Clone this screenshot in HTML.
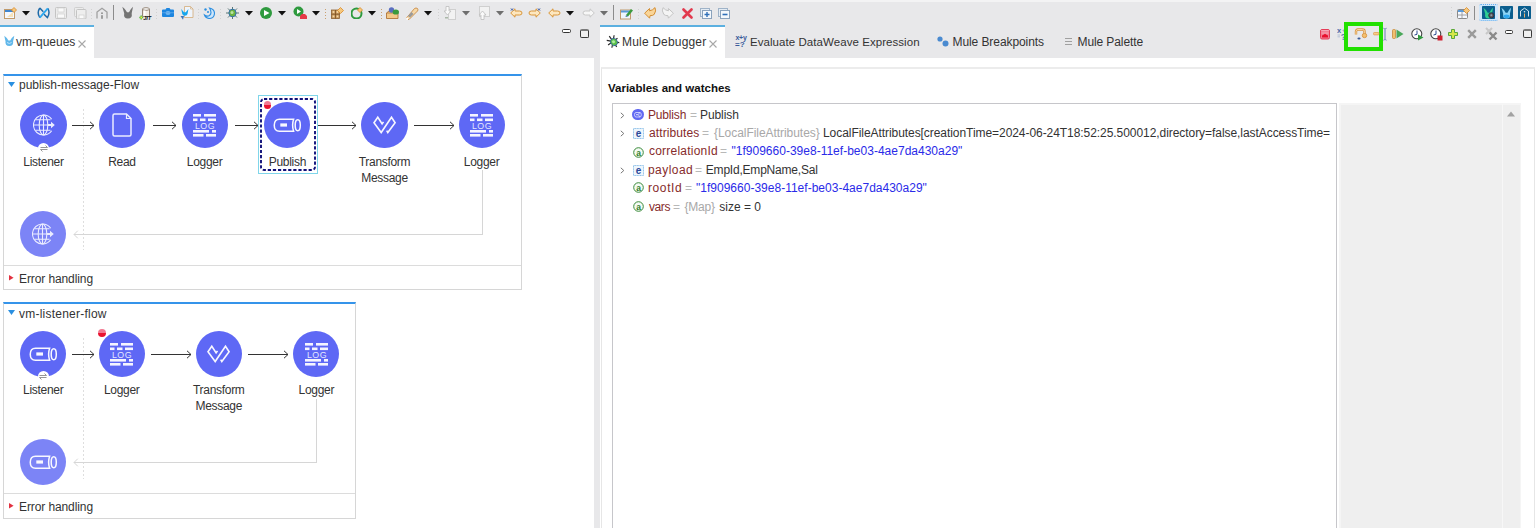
<!DOCTYPE html>
<html><head><meta charset="utf-8">
<style>
*{box-sizing:border-box;margin:0;padding:0}
html,body{width:1536px;height:528px;overflow:hidden;background:#e8e8ea;font-family:"Liberation Sans",sans-serif;font-size:12px;color:#333;position:relative}
.a{position:absolute;display:block}
.t{position:absolute;white-space:nowrap;line-height:14px}
</style></head><body>

<div class="a" style="left:0px;top:0px;width:1536px;height:2px;background:#f3f3f4"></div>
<svg class="a" style="left:4px;top:7px" width="13" height="12" viewBox="0 0 13 12"><rect x="0.5" y="2.5" width="10" height="9" fill="#f4f8ff" stroke="#c09a6b"/><rect x="1" y="3" width="9" height="2" fill="#3d86d1"/><path d="M3 10L9 5V10Z" fill="#f7e2b8"/><path d="M10 0.5L12.5 3L10 5.5L7.5 3Z" fill="#f6c77c" stroke="#d88a2a" stroke-width="0.8"/></svg>
<svg class="a" style="left:22px;top:11px" width="8" height="5" viewBox="0 0 8 5"><path d="M0 0H8L4 4.5Z" fill="#111"/></svg>
<svg class="a" style="left:37px;top:7px" width="13" height="12" viewBox="0 0 13 12"><path d="M2.8 1Q-0.4 5.8 2.8 10.6M2.8 1L6.3 4.85M10.8 1.4Q13.4 5.8 10.4 10.6L7 7.2" fill="none" stroke="#1f6aa8" stroke-width="1.5"/><path d="M2.8 10.6L10.8 1.4" stroke="#2aa8f0" stroke-width="1.8"/></svg>
<svg class="a" style="left:55px;top:7px" width="13" height="12" viewBox="0 0 13 12"><rect x="0.5" y="0.5" width="11" height="11" rx="1" fill="#ececec" stroke="#c4c4c4"/><rect x="3" y="1" width="6" height="4" fill="#fafafa" stroke="#cfcfcf" stroke-width="0.7"/><rect x="2.5" y="7" width="7" height="4" fill="#fafafa" stroke="#cfcfcf" stroke-width="0.7"/></svg>
<svg class="a" style="left:74px;top:7px" width="13" height="12" viewBox="0 0 13 12"><rect x="0.5" y="0.5" width="9" height="9" rx="1" fill="#ececec" stroke="#cfcfcf"/><rect x="2.5" y="2.5" width="9.5" height="9.5" rx="1" fill="#eeeeee" stroke="#c4c4c4"/><rect x="5" y="8" width="5" height="3.5" fill="#fafafa" stroke="#cfcfcf" stroke-width="0.7"/></svg>
<svg class="a" style="left:91px;top:9px" width="1" height="10" viewBox="0 0 1 10"><rect x="0" y="0" width="1" height="1" fill="#d2d2d2"/><rect x="0" y="3" width="1" height="1" fill="#d2d2d2"/><rect x="0" y="6" width="1" height="1" fill="#d2d2d2"/><rect x="0" y="9" width="1" height="1" fill="#d2d2d2"/></svg>
<svg class="a" style="left:96px;top:7px" width="12" height="12" viewBox="0 0 12 12"><path d="M1 11.5V5L6 1.2L11 5V11.5" fill="none" stroke="#a0a0a0" stroke-width="1.3"/><circle cx="6" cy="6.2" r="0.9" fill="#8a8a8a"/><rect x="5.2" y="8" width="1.6" height="4" rx="0.8" fill="#8a8a8a"/></svg>
<div class="a" style="left:113px;top:5px;width:1px;height:15px;background:#8c8c8c"></div>
<svg class="a" style="left:122px;top:6px" width="12" height="14" viewBox="0 0 12 14"><path d="M0.3 0.7Q3.6 3 5 6.2H7Q8.4 3 11 0.7Q10.4 4 9.7 7.2Q10.6 12.6 5.9 12.6Q1.3 12.6 2.2 7.2Q1.3 4 0.3 0.7Z" fill="#747474"/></svg>
<svg class="a" style="left:139px;top:7px" width="13" height="13" viewBox="0 0 13 13"><path d="M3.5 2V9.5H10.5V2" fill="#f3ece4" stroke="#8a7a6a" stroke-width="0.9"/><ellipse cx="7" cy="2" rx="3.5" ry="1.3" fill="#fff" stroke="#8a7a6a" stroke-width="0.9"/><rect x="5" y="3.5" width="1.5" height="5" fill="#fff"/><text x="4.2" y="12.6" font-size="5.6" font-weight="bold" font-style="italic" fill="#111" font-family="Liberation Sans">JIT</text><path d="M0.3 10.5H4.2M2.2 8.5V12.5" stroke="#5ab83a" stroke-width="1.5"/><circle cx="2.3" cy="10.5" r="0.9" fill="#e6e84a"/></svg>
<svg class="a" style="left:156px;top:9px" width="1" height="10" viewBox="0 0 1 10"><rect x="0" y="0" width="1" height="1" fill="#d2d2d2"/><rect x="0" y="3" width="1" height="1" fill="#d2d2d2"/><rect x="0" y="6" width="1" height="1" fill="#d2d2d2"/><rect x="0" y="9" width="1" height="1" fill="#d2d2d2"/></svg>
<svg class="a" style="left:162px;top:8px" width="12" height="9" viewBox="0 0 12 9"><path d="M0 2.5Q0 1.5 1 1.5H3.5L4.5 0H7.5L8.5 1.5H11Q12 1.5 12 2.5V8Q12 9 11 9H1Q0 9 0 8Z" fill="#1d86e0"/><ellipse cx="6" cy="5" rx="2.5" ry="2" fill="#74b8f0"/><rect x="0" y="4.3" width="12" height="0.9" fill="#5aa6ea"/></svg>
<svg class="a" style="left:180px;top:6px" width="14" height="14" viewBox="0 0 14 14"><path d="M4.5 0.5H10.5L13 3V11.5H4.5Z" fill="#eef4fc" stroke="#d6b286" stroke-width="0.9"/><path d="M10.5 0.5V3H13" fill="none" stroke="#d6b286" stroke-width="0.7"/><path d="M1.2 3L4 6.2H5.8L8.4 3L7.6 7.8Q7.2 9.8 4.9 9.8Q2.6 9.8 2.2 7.8Z" fill="#14a6ee"/><path d="M0.5 10H4L3 13.8Z" fill="#3a72b8"/></svg>
<svg class="a" style="left:198px;top:9px" width="1" height="10" viewBox="0 0 1 10"><rect x="0" y="0" width="1" height="1" fill="#d2d2d2"/><rect x="0" y="3" width="1" height="1" fill="#d2d2d2"/><rect x="0" y="6" width="1" height="1" fill="#d2d2d2"/><rect x="0" y="9" width="1" height="1" fill="#d2d2d2"/></svg>
<svg class="a" style="left:203px;top:7px" width="12" height="12" viewBox="0 0 12 12"><path d="M6.5 1Q11.5 2 11.5 6.5Q11 11.5 6 11.5Q2.5 11 1.5 8Q4 10 6.5 8.5Q9.5 6 6.5 1Z" fill="#cfe6fa" stroke="#2d8fe0" stroke-width="1.1"/><circle cx="2.5" cy="2.5" r="1.2" fill="#2d8fe0"/><circle cx="5" cy="5" r="1" fill="#2d8fe0"/></svg>
<svg class="a" style="left:220px;top:9px" width="1" height="10" viewBox="0 0 1 10"><rect x="0" y="0" width="1" height="1" fill="#d2d2d2"/><rect x="0" y="3" width="1" height="1" fill="#d2d2d2"/><rect x="0" y="6" width="1" height="1" fill="#d2d2d2"/><rect x="0" y="9" width="1" height="1" fill="#d2d2d2"/></svg>
<svg class="a" style="left:226px;top:7px" width="13" height="12" viewBox="0 0 13 12"><path d="M6.5 0V12M0 6H13M2 1.5L11 10.5M11 1.5L2 10.5" stroke="#4a6a6a" stroke-width="0.9"/><ellipse cx="6.5" cy="6" rx="3.6" ry="3.8" fill="#6db33f" stroke="#2f6fb0" stroke-width="1"/><circle cx="6" cy="5.5" r="1.5" fill="#b8e3a0"/></svg>
<svg class="a" style="left:245px;top:11px" width="8" height="5" viewBox="0 0 8 5"><path d="M0 0H8L4 4.5Z" fill="#111"/></svg>
<svg class="a" style="left:260px;top:7px" width="12" height="12" viewBox="0 0 12 12"><circle cx="6" cy="6" r="6" fill="#2e9a3e"/><path d="M4 3L9.5 6L4 9Z" fill="#fff"/></svg>
<svg class="a" style="left:278px;top:11px" width="8" height="5" viewBox="0 0 8 5"><path d="M0 0H8L4 4.5Z" fill="#111"/></svg>
<svg class="a" style="left:293px;top:6px" width="14" height="14" viewBox="0 0 14 14"><circle cx="5.5" cy="5.5" r="5" fill="#2e9a3e"/><path d="M4 3L8 5.5L4 8Z" fill="#fff"/><path d="M7 10L9 8H12L14 10V13H7Z" fill="#e53948"/></svg>
<svg class="a" style="left:312px;top:11px" width="8" height="5" viewBox="0 0 8 5"><path d="M0 0H8L4 4.5Z" fill="#111"/></svg>
<svg class="a" style="left:325px;top:9px" width="1" height="10" viewBox="0 0 1 10"><rect x="0" y="0" width="1" height="1" fill="#c9a070"/><rect x="0" y="3" width="1" height="1" fill="#c9a070"/><rect x="0" y="6" width="1" height="1" fill="#c9a070"/><rect x="0" y="9" width="1" height="1" fill="#c9a070"/></svg>
<svg class="a" style="left:331px;top:7px" width="13" height="12" viewBox="0 0 13 12"><rect x="0.5" y="3" width="8" height="8.5" fill="#c89b63" stroke="#8a5f2f" stroke-width="0.8"/><path d="M0.5 7.2H8.5M4.5 3V11.5" stroke="#7a4f20" stroke-width="0.8"/><circle cx="2.5" cy="5" r="0.9" fill="#f5d9a8"/><circle cx="6.5" cy="5" r="0.9" fill="#f5d9a8"/><circle cx="2.5" cy="9.3" r="0.9" fill="#f5d9a8"/><circle cx="6.5" cy="9.3" r="0.9" fill="#f5d9a8"/><path d="M9.5 0.5L12.5 3.5L9.5 6.5L6.5 3.5Z" fill="#f6c77c" stroke="#d88a2a" stroke-width="0.8"/></svg>
<svg class="a" style="left:351px;top:7px" width="12" height="12" viewBox="0 0 12 12"><circle cx="5.5" cy="6.5" r="5" fill="none" stroke="#2e9a3e" stroke-width="2"/><path d="M9 0.5L11.5 3L9 5.5L6.5 3Z" fill="#f6c77c" stroke="#d88a2a" stroke-width="0.8"/></svg>
<svg class="a" style="left:368px;top:11px" width="8" height="5" viewBox="0 0 8 5"><path d="M0 0H8L4 4.5Z" fill="#111"/></svg>
<svg class="a" style="left:381px;top:9px" width="1" height="10" viewBox="0 0 1 10"><rect x="0" y="0" width="1" height="1" fill="#c9a070"/><rect x="0" y="3" width="1" height="1" fill="#c9a070"/><rect x="0" y="6" width="1" height="1" fill="#c9a070"/><rect x="0" y="9" width="1" height="1" fill="#c9a070"/></svg>
<svg class="a" style="left:386px;top:7px" width="14" height="12" viewBox="0 0 14 12"><path d="M0.5 6L3 4H10L12 6V11.5H0.5Z" fill="#f3c98a" stroke="#b0763a" stroke-width="0.9"/><path d="M0.5 6H12" stroke="#b0763a" stroke-width="0.8"/><circle cx="5.5" cy="3" r="2.7" fill="#5a6ec0"/><ellipse cx="9.8" cy="5" rx="3.2" ry="2.6" fill="#3a9a3e"/></svg>
<svg class="a" style="left:405px;top:7px" width="14" height="13" viewBox="0 0 14 13"><path d="M1.5 11L9.5 1.5Q11 0.5 12.5 1.5Q13.5 3 12.5 4L4 12.5Q2 13 1.5 11Z" fill="#f6d8a8" stroke="#c88a44" stroke-width="0.9"/><path d="M3 9L6.5 5L8.5 7L5 10.5Z" fill="#9a9a9a"/><path d="M1.5 11L3 12.5" stroke="#fff" stroke-width="2"/></svg>
<svg class="a" style="left:424px;top:11px" width="8" height="5" viewBox="0 0 8 5"><path d="M0 0H8L4 4.5Z" fill="#111"/></svg>
<svg class="a" style="left:438px;top:9px" width="1" height="10" viewBox="0 0 1 10"><rect x="0" y="0" width="1" height="1" fill="#d2d2d2"/><rect x="0" y="3" width="1" height="1" fill="#d2d2d2"/><rect x="0" y="6" width="1" height="1" fill="#d2d2d2"/><rect x="0" y="9" width="1" height="1" fill="#d2d2d2"/></svg>
<svg class="a" style="left:444px;top:6px" width="12" height="14" viewBox="0 0 12 14"><rect x="4.5" y="3.5" width="7" height="10" fill="#f2f2f2" stroke="#cfcfcf"/><path d="M2 0.5H5V5H7L3.5 9L0 5H2Z" fill="#fafafa" stroke="#bcbcbc" stroke-width="0.8"/><rect x="1" y="11" width="3" height="1.5" fill="#aab8a8"/></svg>
<svg class="a" style="left:462px;top:11px" width="8" height="5" viewBox="0 0 8 5"><path d="M0 0H8L4 4.5Z" fill="#6e6e6e"/></svg>
<svg class="a" style="left:478px;top:6px" width="12" height="14" viewBox="0 0 12 14"><rect x="1.5" y="0.5" width="10" height="10" fill="#f2f2f2" stroke="#cfcfcf"/><path d="M3 13.5V9H1L4.5 5L8 9H6V13.5Z" fill="#fafafa" stroke="#bcbcbc" stroke-width="0.8"/></svg>
<svg class="a" style="left:496px;top:11px" width="8" height="5" viewBox="0 0 8 5"><path d="M0 0H8L4 4.5Z" fill="#6e6e6e"/></svg>
<svg class="a" style="left:510px;top:8px" width="13" height="10" viewBox="0 0 13 10"><path d="M0.7 5L5 0.8V3H9.5Q12 3 12 5Q12 7 9.5 7H5V9.2Z" fill="#fde7bf" stroke="#d9963a" stroke-width="1"/><path d="M1 0.5L3 2.5M3 0.5L1 2.5" stroke="#2c4fa0" stroke-width="1"/></svg>
<svg class="a" style="left:528px;top:8px" width="13" height="10" viewBox="0 0 13 10"><g transform="translate(13,0) scale(-1,1)"><path d="M0.7 5L5 0.8V3H9.5Q12 3 12 5Q12 7 9.5 7H5V9.2Z" fill="#fde7bf" stroke="#d9963a" stroke-width="1"/></g><path d="M10 0.5L12 2.5M12 0.5L10 2.5" stroke="#2c4fa0" stroke-width="1"/></svg>
<svg class="a" style="left:548px;top:8px" width="13" height="10" viewBox="0 0 13 10"><path d="M0.7 5L5 0.8V3H9.5Q12 3 12 5Q12 7 9.5 7H5V9.2Z" fill="#fde7bf" stroke="#d9963a" stroke-width="1"/></svg>
<svg class="a" style="left:566px;top:11px" width="8" height="5" viewBox="0 0 8 5"><path d="M0 0H8L4 4.5Z" fill="#111"/></svg>
<svg class="a" style="left:582px;top:8px" width="13" height="10" viewBox="0 0 13 10"><g transform="translate(13,0) scale(-1,1)"><path d="M0.7 5L5 0.8V3H9.5Q12 3 12 5Q12 7 9.5 7H5V9.2Z" fill="#f7f7f7" stroke="#c8c8c8" stroke-width="1"/></g></svg>
<svg class="a" style="left:600px;top:11px" width="8" height="5" viewBox="0 0 8 5"><path d="M0 0H8L4 4.5Z" fill="#6e6e6e"/></svg>
<div class="a" style="left:613px;top:5px;width:1px;height:15px;background:#8c8c8c"></div>
<svg class="a" style="left:620px;top:7px" width="14" height="13" viewBox="0 0 14 13"><rect x="0.5" y="3" width="10" height="9" fill="#eef6ff" stroke="#c09a6b"/><rect x="1" y="3.5" width="9" height="2" fill="#5a9ad8"/><path d="M6 8L11 2L13 3.5L8 9.5Z" fill="#3a9a3e"/><path d="M6 8L8 9.5L5.5 10Z" fill="#4a70a0"/></svg>
<svg class="a" style="left:638px;top:9px" width="1" height="10" viewBox="0 0 1 10"><rect x="0" y="0" width="1" height="1" fill="#d2d2d2"/><rect x="0" y="3" width="1" height="1" fill="#d2d2d2"/><rect x="0" y="6" width="1" height="1" fill="#d2d2d2"/><rect x="0" y="9" width="1" height="1" fill="#d2d2d2"/></svg>
<svg class="a" style="left:644px;top:7px" width="13" height="12" viewBox="0 0 13 12"><path d="M0.6 6.2L5.6 1.5V3.8Q8.5 3.5 11 0.6Q12.6 3.8 10.2 7.4Q8.6 8.8 6 8.7L5.6 11.2Z" fill="#fad598" stroke="#d38f35" stroke-width="1"/></svg>
<svg class="a" style="left:661px;top:7px" width="13" height="12" viewBox="0 0 13 12"><g transform="translate(13,0) scale(-1,1)"><path d="M0.6 6.2L5.6 1.5V3.8Q8.5 3.5 11 0.6Q12.6 3.8 10.2 7.4Q8.6 8.8 6 8.7L5.6 11.2Z" fill="#f4f4f4" stroke="#c4c4c4" stroke-width="1"/></g></svg>
<svg class="a" style="left:682px;top:8px" width="11" height="11" viewBox="0 0 11 11"><path d="M1.5 1.5L9.5 9.5M9.5 1.5L1.5 9.5" stroke="#e23a4e" stroke-width="2.6" stroke-linecap="round"/></svg>
<svg class="a" style="left:700px;top:8px" width="12" height="11" viewBox="0 0 12 11"><rect x="0.5" y="0.5" width="9" height="8" fill="#e4ecf4" stroke="#9fb3c8"/><rect x="2.5" y="2.5" width="9" height="8" fill="#f4f8fc" stroke="#8aa2bc"/><path d="M4.5 6.5H9.5M7 4V9" stroke="#2f6fb8" stroke-width="1.4"/></svg>
<svg class="a" style="left:718px;top:8px" width="12" height="11" viewBox="0 0 12 11"><rect x="0.5" y="0.5" width="9" height="8" fill="#e4ecf4" stroke="#9fb3c8"/><rect x="2.5" y="2.5" width="9" height="8" fill="#f4f8fc" stroke="#8aa2bc"/><path d="M4.5 6.5H9.5" stroke="#2f6fb8" stroke-width="1.6"/></svg>
<svg class="a" style="left:1451px;top:7px" width="1" height="12" viewBox="0 0 1 12"><rect x="0" y="0" width="1" height="1" fill="#d2d2d2"/><rect x="0" y="3" width="1" height="1" fill="#d2d2d2"/><rect x="0" y="6" width="1" height="1" fill="#d2d2d2"/><rect x="0" y="9" width="1" height="1" fill="#d2d2d2"/></svg>
<svg class="a" style="left:1457px;top:7px" width="13" height="12" viewBox="0 0 13 12"><rect x="0.5" y="2.5" width="10" height="9" rx="1" fill="#f4f8ff" stroke="#8a8a8a"/><rect x="1" y="3" width="9" height="2" fill="#5a9ad8"/><path d="M1 8H10M5 5V11.5" stroke="#9a9a9a" stroke-width="0.9"/><path d="M9.5 0.5L12.5 3.5L9.5 6.5L6.5 3.5Z" fill="#f6c77c" stroke="#d88a2a" stroke-width="0.8"/></svg>
<div class="a" style="left:1474px;top:6px;width:1px;height:14px;background:#8c8c8c"></div>
<div class="a" style="left:1479px;top:4px;width:19px;height:17px;background:#cde6fb;border-top:1px dotted #6ab0ee;border-bottom:1px dotted #6ab0ee;border-radius:2px"></div>
<svg class="a" style="left:1482px;top:6px" width="13" height="13" viewBox="0 0 13 13"><rect x="0" y="0" width="13" height="13" rx="0.8" fill="#0b5e8e"/><g transform="translate(1.2,1.2) scale(0.9)"><path d="M0.3 0.7Q3.6 3 5 6.2H7Q8.4 3 11 0.7Q10.4 4 9.7 7.2Q10.6 12.6 5.9 12.6Q1.3 12.6 2.2 7.2Q1.3 4 0.3 0.7Z" fill="#2fcf94"/></g><circle cx="9.3" cy="9.3" r="2.6" fill="#555" stroke="#2a2a40" stroke-width="0.8"/><circle cx="9.3" cy="9.3" r="1" fill="#8a9ab0"/></svg>
<svg class="a" style="left:1500px;top:6px" width="13" height="13" viewBox="0 0 13 13"><rect x="0" y="0" width="13" height="13" rx="0.8" fill="#0b5e8e"/><g transform="translate(1.2,1.2) scale(0.9)"><path d="M0.3 0.7Q3.6 3 5 6.2H7Q8.4 3 11 0.7Q10.4 4 9.7 7.2Q10.6 12.6 5.9 12.6Q1.3 12.6 2.2 7.2Q1.3 4 0.3 0.7Z" fill="#8cd4f5"/></g><ellipse cx="6.5" cy="10.3" rx="3.2" ry="1.8" fill="#2ea8f0"/></svg>
<svg class="a" style="left:1518px;top:6px" width="13" height="13" viewBox="0 0 13 13"><rect x="0" y="0" width="13" height="13" rx="0.8" fill="#0b5e8e"/><path d="M2.5 10.5V5L6.5 2.2L10.5 5V10.5" fill="none" stroke="#d8e6f0" stroke-width="1"/><circle cx="6.5" cy="5.8" r="0.8" fill="#e0eaf2"/><rect x="6" y="7.5" width="1" height="4" fill="#e8b070"/></svg>
<div class="a" style="left:0px;top:25px;width:94px;height:33px;background:#fff;border-top:2px solid #5cb0e0"></div>
<svg class="a" style="left:4px;top:35px" width="11" height="12" viewBox="0 0 11 12"><path d="M0.3 0.7Q3.2 2.8 4.4 5.4H6.2Q7.4 2.8 10.3 0.7Q9.7 3.8 9.1 6.2Q9.9 11 5.3 11Q0.8 11 1.5 6.2Q0.9 3.8 0.3 0.7Z" fill="#62b8ea"/><path d="M3 7.5Q5.3 9.5 7.6 7.5" stroke="#c8e8fb" stroke-width="0.9" fill="none"/></svg>
<div class="t" style="left:16px;top:35px;font-size:12px;color:#333;font-weight:400;letter-spacing:0px;">vm-queues</div>
<svg class="a" style="left:78px;top:40px" width="8" height="8" viewBox="0 0 8 8"><path d="M0.5 0.5L7.5 7.5M7.5 0.5L0.5 7.5" stroke="#a8a8a8" stroke-width="1.1"/></svg>
<div class="a" style="left:562px;top:29px;width:8.5px;height:4px;border:1.5px solid #333;border-radius:1.5px;background:#fff"></div>
<div class="a" style="left:580px;top:29px;width:9px;height:9px;border:1.5px solid #3a3a3a;border-top:2.5px solid #7a7a7a;border-radius:2px;background:#f0f0f0"></div>
<div class="a" style="left:0px;top:58px;width:594px;height:470px;background:#fff"></div>
<div class="a" style="left:3px;top:74px;width:519px;height:216px;border:1px solid #d6d6d6;border-top:2px solid #3594ea;background:#fff"></div>
<svg class="a" style="left:8px;top:81.6px" width="7" height="6" viewBox="0 0 7 6"><path d="M0 0H7L3.5 5Z" fill="#2a8fe0"/></svg>
<div class="t" style="left:19px;top:78px;font-size:12px;color:#333;font-weight:400;letter-spacing:0px;">publish-message-Flow</div>
<div class="a" style="left:83px;top:109px;width:1px;height:141px;background:repeating-linear-gradient(#dedede 0 2px,transparent 2px 4px)"></div>
<div class="a" style="left:20.4px;top:101.9px;width:46.2px;height:46.2px;border-radius:50%;background:#5e68f5"></div>
<svg class="a" style="left:32.5px;top:114px" width="24" height="22" viewBox="0 0 24 22"><g fill="none" stroke="#eaecff" stroke-width="1.1"><path d="M18.7 5.3A10 10 0 1 0 18.7 16.7"/><path d="M10.5 1A4.3 10 0 0 0 10.5 21A4.3 10 0 0 0 10.5 1"/><path d="M10.5 1V21M2.5 5.8H17.5M0.8 11H15M2.5 16.2H17.5"/></g><path d="M15 10H18V7.8L21.8 11L18 14.2V12H15Z" fill="#eaecff"/></svg>
<div class="a" style="left:38.0px;top:142.8px;width:11px;height:11px;border-radius:50%;background:#fff"></div>
<svg class="a" style="left:39.5px;top:144.8px" width="8" height="7" viewBox="0 0 8 7"><path d="M0.5 2.5H7.5M5.5 0.5L7.5 2.5M7.5 4.5H0.5M2.5 6.5L0.5 4.5" stroke="#8a8a8a" stroke-width="0.9" fill="none"/></svg>
<div class="a" style="left:98.9px;top:101.9px;width:46.2px;height:46.2px;border-radius:50%;background:#5e68f5"></div>
<svg class="a" style="left:112px;top:113px" width="20" height="24" viewBox="0 0 20 24"><path d="M2.5 1H14.5L19 5.5V21.5Q19 23 17.5 23H2.5Q1 23 1 21.5V2.5Q1 1 2.5 1Z" fill="none" stroke="#eaecff" stroke-width="1.5"/><path d="M14.5 1V5.5H19" fill="none" stroke="#eaecff" stroke-width="1.2"/></svg>
<div class="a" style="left:181.5px;top:101.9px;width:46.2px;height:46.2px;border-radius:50%;background:#5e68f5"></div>
<svg class="a" style="left:193.1px;top:114px" width="23" height="23" viewBox="0 0 23 23"><g fill="#f4f4ff"><rect x="0" y="0" width="8" height="2.6"/><rect x="11" y="0" width="12" height="2.6"/><rect x="0" y="4.5" width="4.5" height="2.6"/><rect x="7" y="4.5" width="5.5" height="2.6"/><rect x="15" y="4.5" width="8" height="2.6"/><rect x="0" y="16" width="16" height="2.6"/><rect x="19" y="16" width="4" height="2.6"/><rect x="0" y="20" width="10.5" height="2.6"/><rect x="13" y="20" width="10" height="2.6"/></g><text x="12" y="14.8" text-anchor="middle" font-family="Liberation Sans" font-size="8.8" fill="#e4e6ff" letter-spacing="0.5">LOG</text></svg>
<div class="a" style="left:257.5px;top:95px;width:60.5px;height:79px;border:1.4px solid #80d6ea"></div>
<svg class="a" style="left:258px;top:96px" width="60" height="78" viewBox="0 0 60 78"><rect x="3" y="3" width="54" height="71" rx="3" fill="none" stroke="#10107a" stroke-width="1.9" stroke-dasharray="3.2 1.9"/></svg>
<div class="a" style="left:264.29999999999995px;top:101.9px;width:46.2px;height:46.2px;border-radius:50%;background:#5e68f5"></div>
<svg class="a" style="left:272.9px;top:117.5px" width="29" height="15" viewBox="0 0 29 15"><path d="M20.6 1.15H6.5Q1.25 1.15 1.25 7.15Q1.25 13.15 6.5 13.15H20.6Q18.6 7.15 20.6 1.15Z" fill="none" stroke="#f8f8ff" stroke-width="1.5"/><ellipse cx="24.75" cy="7.15" rx="2.55" ry="5.5" fill="none" stroke="#f8f8ff" stroke-width="1.5"/><rect x="7.3" y="5.4" width="6.7" height="3.2" fill="#f8f8ff"/></svg>
<div class="a" style="left:263.7px;top:101.3px;width:7.8px;height:7.8px;border-radius:50%;background:linear-gradient(#f27a92 0 45%,#ea1430 45%)"></div>
<div class="a" style="left:361.4px;top:101.9px;width:46.2px;height:46.2px;border-radius:50%;background:#5e68f5"></div>
<svg class="a" style="left:371.0px;top:113px" width="27" height="24" viewBox="0 0 27 24"><path d="M12.5 8.9L11.1 10.9L6.8 4.3L3 9.8L10.2 19.5L20.5 4.3L24.1 9.8L16.8 19.5L15.7 17.7" fill="none" stroke="#f6f6ff" stroke-width="1.6" stroke-linejoin="miter" stroke-miterlimit="6"/></svg>
<div class="a" style="left:458.5px;top:101.9px;width:46.2px;height:46.2px;border-radius:50%;background:#5e68f5"></div>
<svg class="a" style="left:470.1px;top:114px" width="23" height="23" viewBox="0 0 23 23"><g fill="#f4f4ff"><rect x="0" y="0" width="8" height="2.6"/><rect x="11" y="0" width="12" height="2.6"/><rect x="0" y="4.5" width="4.5" height="2.6"/><rect x="7" y="4.5" width="5.5" height="2.6"/><rect x="15" y="4.5" width="8" height="2.6"/><rect x="0" y="16" width="16" height="2.6"/><rect x="19" y="16" width="4" height="2.6"/><rect x="0" y="20" width="10.5" height="2.6"/><rect x="13" y="20" width="10" height="2.6"/></g><text x="12" y="14.8" text-anchor="middle" font-family="Liberation Sans" font-size="8.8" fill="#e4e6ff" letter-spacing="0.5">LOG</text></svg>
<svg class="a" style="left:72px;top:121px" width="23" height="9" viewBox="0 0 23 9"><path d="M0 4.5H22M18 0.8L22 4.5L18 8.2" fill="none" stroke="#333" stroke-width="1"/></svg>
<svg class="a" style="left:153px;top:121px" width="24" height="9" viewBox="0 0 24 9"><path d="M0 4.5H23M19 0.8L23 4.5L19 8.2" fill="none" stroke="#333" stroke-width="1"/></svg>
<svg class="a" style="left:235px;top:121px" width="24" height="9" viewBox="0 0 24 9"><path d="M0 4.5H23M19 0.8L23 4.5L19 8.2" fill="none" stroke="#333" stroke-width="1"/></svg>
<svg class="a" style="left:318px;top:121px" width="39" height="9" viewBox="0 0 39 9"><path d="M0 4.5H38M34 0.8L38 4.5L34 8.2" fill="none" stroke="#333" stroke-width="1"/></svg>
<svg class="a" style="left:414px;top:121px" width="41" height="9" viewBox="0 0 41 9"><path d="M0 4.5H40M36 0.8L40 4.5L36 8.2" fill="none" stroke="#333" stroke-width="1"/></svg>
<div class="t" style="left:-16.5px;width:120px;top:154.5px;text-align:center;color:#333;letter-spacing:-0.3px">Listener</div>
<div class="t" style="left:62px;width:120px;top:154.5px;text-align:center;color:#333;letter-spacing:-0.3px">Read</div>
<div class="t" style="left:144.6px;width:120px;top:154.5px;text-align:center;color:#333;letter-spacing:-0.3px">Logger</div>
<div class="t" style="left:227.39999999999998px;width:120px;top:154.5px;text-align:center;color:#333;letter-spacing:-0.3px">Publish</div>
<div class="t" style="left:324.5px;width:120px;top:154.5px;text-align:center;color:#333;letter-spacing:-0.3px">Transform</div>
<div class="t" style="left:324.5px;width:120px;top:170.5px;text-align:center;color:#333;letter-spacing:-0.3px">Message</div>
<div class="t" style="left:421.6px;width:120px;top:154.5px;text-align:center;color:#333;letter-spacing:-0.3px">Logger</div>
<div class="a" style="left:482px;top:170px;width:1px;height:65px;background:#d6d6d6"></div>
<div class="a" style="left:74px;top:234px;width:409px;height:1px;background:#d6d6d6"></div>
<svg class="a" style="left:73px;top:230px" width="6" height="9" viewBox="0 0 6 9"><path d="M4.8 0.7L1 4.5L4.8 8.3" fill="none" stroke="#d6d6d6" stroke-width="1"/></svg>
<div class="a" style="left:19.9px;top:210.70000000000002px;width:46.2px;height:46.2px;border-radius:50%;background:#7c84f6"></div>
<svg class="a" style="left:32px;top:222.8px" width="24" height="22" viewBox="0 0 24 22"><g fill="none" stroke="#eaecff" stroke-width="1.1"><path d="M18.7 5.3A10 10 0 1 0 18.7 16.7"/><path d="M10.5 1A4.3 10 0 0 0 10.5 21A4.3 10 0 0 0 10.5 1"/><path d="M10.5 1V21M2.5 5.8H17.5M0.8 11H15M2.5 16.2H17.5"/></g><path d="M15 10H18V7.8L21.8 11L18 14.2V12H15Z" fill="#eaecff"/></svg>
<div class="a" style="left:4px;top:265px;width:517px;height:1px;background:#dcdcdc"></div>
<svg class="a" style="left:8.5px;top:274.8px" width="5" height="6" viewBox="0 0 5 6"><path d="M0 0L4.6 2.8L0 5.6Z" fill="#e2303f"/></svg>
<div class="t" style="left:19px;top:272px;font-size:12px;color:#333;font-weight:400;letter-spacing:-0.1px;">Error handling</div>
<div class="a" style="left:3px;top:302px;width:353px;height:217px;border:1px solid #d6d6d6;border-top:2px solid #3594ea;background:#fff"></div>
<svg class="a" style="left:8px;top:310.3px" width="7" height="6" viewBox="0 0 7 6"><path d="M0 0H7L3.5 5Z" fill="#2a8fe0"/></svg>
<div class="t" style="left:19px;top:307px;font-size:12px;color:#333;font-weight:400;letter-spacing:0.23px;">vm-listener-flow</div>
<div class="a" style="left:83px;top:338px;width:1px;height:141px;background:repeating-linear-gradient(#dedede 0 2px,transparent 2px 4px)"></div>
<div class="a" style="left:20.1px;top:330.9px;width:46.2px;height:46.2px;border-radius:50%;background:#5e68f5"></div>
<svg class="a" style="left:28.700000000000003px;top:346.5px" width="29" height="15" viewBox="0 0 29 15"><path d="M20.6 1.15H6.5Q1.25 1.15 1.25 7.15Q1.25 13.15 6.5 13.15H20.6Q18.6 7.15 20.6 1.15Z" fill="none" stroke="#f8f8ff" stroke-width="1.5"/><ellipse cx="24.75" cy="7.15" rx="2.55" ry="5.5" fill="none" stroke="#f8f8ff" stroke-width="1.5"/><rect x="7.3" y="5.4" width="6.7" height="3.2" fill="#f8f8ff"/></svg>
<div class="a" style="left:37.7px;top:371.3px;width:11px;height:11px;border-radius:50%;background:#fff"></div>
<svg class="a" style="left:39.2px;top:373.3px" width="8" height="7" viewBox="0 0 8 7"><path d="M0.5 2.5H7.5M5.5 0.5L7.5 2.5M7.5 4.5H0.5M2.5 6.5L0.5 4.5" stroke="#8a8a8a" stroke-width="0.9" fill="none"/></svg>
<div class="a" style="left:98.6px;top:330.9px;width:46.2px;height:46.2px;border-radius:50%;background:#5e68f5"></div>
<svg class="a" style="left:110.2px;top:343px" width="23" height="23" viewBox="0 0 23 23"><g fill="#f4f4ff"><rect x="0" y="0" width="8" height="2.6"/><rect x="11" y="0" width="12" height="2.6"/><rect x="0" y="4.5" width="4.5" height="2.6"/><rect x="7" y="4.5" width="5.5" height="2.6"/><rect x="15" y="4.5" width="8" height="2.6"/><rect x="0" y="16" width="16" height="2.6"/><rect x="19" y="16" width="4" height="2.6"/><rect x="0" y="20" width="10.5" height="2.6"/><rect x="13" y="20" width="10" height="2.6"/></g><text x="12" y="14.8" text-anchor="middle" font-family="Liberation Sans" font-size="8.8" fill="#e4e6ff" letter-spacing="0.5">LOG</text></svg>
<div class="a" style="left:98.4px;top:329.3px;width:7.8px;height:7.8px;border-radius:50%;background:linear-gradient(#f27a92 0 45%,#ea1430 45%)"></div>
<div class="a" style="left:195.70000000000002px;top:330.9px;width:46.2px;height:46.2px;border-radius:50%;background:#5e68f5"></div>
<svg class="a" style="left:205.3px;top:342px" width="27" height="24" viewBox="0 0 27 24"><path d="M12.5 8.9L11.1 10.9L6.8 4.3L3 9.8L10.2 19.5L20.5 4.3L24.1 9.8L16.8 19.5L15.7 17.7" fill="none" stroke="#f6f6ff" stroke-width="1.6" stroke-linejoin="miter" stroke-miterlimit="6"/></svg>
<div class="a" style="left:293.29999999999995px;top:330.9px;width:46.2px;height:46.2px;border-radius:50%;background:#5e68f5"></div>
<svg class="a" style="left:304.9px;top:343px" width="23" height="23" viewBox="0 0 23 23"><g fill="#f4f4ff"><rect x="0" y="0" width="8" height="2.6"/><rect x="11" y="0" width="12" height="2.6"/><rect x="0" y="4.5" width="4.5" height="2.6"/><rect x="7" y="4.5" width="5.5" height="2.6"/><rect x="15" y="4.5" width="8" height="2.6"/><rect x="0" y="16" width="16" height="2.6"/><rect x="19" y="16" width="4" height="2.6"/><rect x="0" y="20" width="10.5" height="2.6"/><rect x="13" y="20" width="10" height="2.6"/></g><text x="12" y="14.8" text-anchor="middle" font-family="Liberation Sans" font-size="8.8" fill="#e4e6ff" letter-spacing="0.5">LOG</text></svg>
<svg class="a" style="left:72px;top:350px" width="23" height="9" viewBox="0 0 23 9"><path d="M0 4.5H22M18 0.8L22 4.5L18 8.2" fill="none" stroke="#333" stroke-width="1"/></svg>
<svg class="a" style="left:151px;top:350px" width="41" height="9" viewBox="0 0 41 9"><path d="M0 4.5H40M36 0.8L40 4.5L36 8.2" fill="none" stroke="#333" stroke-width="1"/></svg>
<svg class="a" style="left:248px;top:350px" width="41" height="9" viewBox="0 0 41 9"><path d="M0 4.5H40M36 0.8L40 4.5L36 8.2" fill="none" stroke="#333" stroke-width="1"/></svg>
<div class="t" style="left:-16.799999999999997px;width:120px;top:383px;text-align:center;color:#333;letter-spacing:-0.3px">Listener</div>
<div class="t" style="left:61.7px;width:120px;top:383px;text-align:center;color:#333;letter-spacing:-0.3px">Logger</div>
<div class="t" style="left:158.8px;width:120px;top:383px;text-align:center;color:#333;letter-spacing:-0.3px">Transform</div>
<div class="t" style="left:158.8px;width:120px;top:399px;text-align:center;color:#333;letter-spacing:-0.3px">Message</div>
<div class="t" style="left:256.4px;width:120px;top:383px;text-align:center;color:#333;letter-spacing:-0.3px">Logger</div>
<div class="a" style="left:316px;top:399px;width:1px;height:64px;background:#d6d6d6"></div>
<div class="a" style="left:74px;top:462px;width:243px;height:1px;background:#d6d6d6"></div>
<svg class="a" style="left:73px;top:458px" width="6" height="9" viewBox="0 0 6 9"><path d="M4.8 0.7L1 4.5L4.8 8.3" fill="none" stroke="#d6d6d6" stroke-width="1"/></svg>
<div class="a" style="left:20.1px;top:438.9px;width:46.2px;height:46.2px;border-radius:50%;background:#7c84f6"></div>
<svg class="a" style="left:28.700000000000003px;top:454.5px" width="29" height="15" viewBox="0 0 29 15"><path d="M20.6 1.15H6.5Q1.25 1.15 1.25 7.15Q1.25 13.15 6.5 13.15H20.6Q18.6 7.15 20.6 1.15Z" fill="none" stroke="#f8f8ff" stroke-width="1.5"/><ellipse cx="24.75" cy="7.15" rx="2.55" ry="5.5" fill="none" stroke="#f8f8ff" stroke-width="1.5"/><rect x="7.3" y="5.4" width="6.7" height="3.2" fill="#f8f8ff"/></svg>
<div class="a" style="left:4px;top:493px;width:351px;height:1px;background:#dcdcdc"></div>
<svg class="a" style="left:8.5px;top:502.5px" width="5" height="6" viewBox="0 0 5 6"><path d="M0 0L4.6 2.8L0 5.6Z" fill="#e2303f"/></svg>
<div class="t" style="left:19px;top:500px;font-size:12px;color:#333;font-weight:400;letter-spacing:-0.1px;">Error handling</div>
<div class="a" style="left:600px;top:25px;width:125px;height:33px;background:#fff;border-top:2px solid #5cb0e0"></div>
<svg class="a" style="left:604px;top:33px" width="16" height="16" viewBox="0 0 16 16"><g transform="rotate(-35 9 8.5)"><path d="M9 2V15M3 8.5H14.5M4.5 4L13.5 13M13.5 4L4.5 13" stroke="#2a2a2a" stroke-width="1.2"/><ellipse cx="9.5" cy="9.5" rx="3.3" ry="3.8" fill="#5cc04a" stroke="#2f5fa0" stroke-width="0.8"/><circle cx="9.3" cy="9" r="1.5" fill="#b0eaa0"/></g></svg>
<div class="t" style="left:622px;top:35px;font-size:12px;color:#333;font-weight:400;letter-spacing:0.18px;">Mule Debugger</div>
<svg class="a" style="left:709px;top:40px" width="8" height="8" viewBox="0 0 8 8"><path d="M0.5 0.5L7.5 7.5M7.5 0.5L0.5 7.5" stroke="#a8a8a8" stroke-width="1.1"/></svg>
<svg class="a" style="left:735px;top:33px" width="15" height="15" viewBox="0 0 15 15"><text x="0.5" y="6.5" font-family="Liberation Sans" font-weight="bold" font-size="7" fill="#3a5a9a" letter-spacing="-0.3">x+y</text><text x="0" y="13.5" font-family="Liberation Sans" font-weight="bold" font-size="8" fill="#3a5a9a">=?</text></svg>
<div class="t" style="left:750px;top:35px;font-size:11.5px;color:#333;font-weight:400;letter-spacing:0.06px;">Evaluate DataWeave Expression</div>
<svg class="a" style="left:937px;top:36px" width="12" height="11" viewBox="0 0 12 11"><circle cx="3" cy="3" r="2.6" fill="#4a8ad0"/><circle cx="8.5" cy="7.5" r="3" fill="#4a8ad0"/></svg>
<div class="t" style="left:952.5px;top:35px;font-size:12px;color:#333;font-weight:400;letter-spacing:-0.08px;">Mule Breakpoints</div>
<svg class="a" style="left:1065px;top:38px" width="7" height="7" viewBox="0 0 7 7"><path d="M0 0.5H7M0 3.5H7M0 6.5H7" stroke="#a0a0a0" stroke-width="1"/></svg>
<div class="t" style="left:1077.5px;top:35px;font-size:12px;color:#333;font-weight:400;letter-spacing:-0.1px;">Mule Palette</div>
<svg class="a" style="left:1320px;top:29px" width="10" height="11" viewBox="0 0 10 11"><rect x="0.5" y="0.5" width="9" height="9.5" rx="1.5" fill="#f27f94" stroke="#e53c58" stroke-width="1"/><path d="M1.5 1.5H8.5" stroke="#fbd0d8" stroke-width="1" stroke-dasharray="1 1"/><rect x="1.5" y="3.5" width="7" height="1.2" fill="#f5a0b0"/><path d="M2 8.5V6.5L3.5 5.8L5 4.8L6.5 5.8L8 6.5V8.5Z" fill="#e8102e"/></svg>
<svg class="a" style="left:1337px;top:26px" width="9" height="15" viewBox="0 0 9 15"><text x="0" y="6.5" font-family="Liberation Sans" font-weight="bold" font-size="7.5" fill="#4a6aa8">x</text><text x="5" y="6" font-family="Liberation Sans" font-weight="bold" font-size="6" fill="#8aa0c8">+</text><path d="M0.5 9H3M0.5 10.8H3" stroke="#a8b8d0" stroke-width="0.8"/><text x="3.8" y="13.5" font-family="Liberation Sans" font-weight="bold" font-size="8.5" fill="#5a78b0">?</text></svg>
<div class="a" style="left:1344px;top:22px;width:39px;height:29px;border:4px solid #21e000"></div>
<svg class="a" style="left:1354px;top:28px" width="14" height="12" viewBox="0 0 14 12"><path d="M2 6.5V3.5Q2 1.5 4 1.5H8.5Q10.5 1.5 10.5 3.5V5.5" fill="none" stroke="#d8923e" stroke-width="2.4"/><path d="M2 6.5V3.5Q2 1.5 4 1.5H8.5Q10.5 1.5 10.5 3.5V5.5" fill="none" stroke="#fbe0b0" stroke-width="0.9"/><circle cx="10.5" cy="7.5" r="2.2" fill="#f4c070" stroke="#d8923e" stroke-width="0.9"/><ellipse cx="5" cy="10.5" rx="1.6" ry="0.9" fill="#3a5a98"/></svg>
<svg class="a" style="left:1373px;top:27px" width="15" height="14" viewBox="0 0 15 14"><rect x="0.5" y="5.5" width="5.5" height="2.4" rx="0.8" fill="#f6cc8a" stroke="#dc9a48" stroke-width="0.7"/><path d="M10.5 1.3Q11.5 1.3 12 2.2Q12.5 1.3 13.5 1.3M12 2.2V12.3M10.5 13.2Q11.5 13.2 12 12.3Q12.5 13.2 13.5 13.2" fill="none" stroke="#5a72b0" stroke-width="0.9"/></svg>
<svg class="a" style="left:1392px;top:29px" width="12" height="10" viewBox="0 0 12 10"><rect x="0.5" y="0.5" width="3" height="9" rx="1" fill="#f0c070" stroke="#c88a3a" stroke-width="0.8"/><path d="M4.5 0.5L11.5 5L4.5 9.5Z" fill="#49a85a"/></svg>
<svg class="a" style="left:1411px;top:28px" width="13" height="13" viewBox="0 0 13 13"><circle cx="5.8" cy="5.8" r="5" fill="#fff" stroke="#444" stroke-width="1.1"/><path d="M6 2.5V6.3L3.5 7" fill="none" stroke="#2a4a90" stroke-width="1"/><path d="M7 6.5L12.5 9.5L7 12.5Z" fill="#2e9a3e"/></svg>
<svg class="a" style="left:1430px;top:28px" width="13" height="13" viewBox="0 0 13 13"><circle cx="5.8" cy="5.8" r="5" fill="#fff" stroke="#444" stroke-width="1.1"/><path d="M6 2.5V6.3L3.5 7" fill="none" stroke="#2a4a90" stroke-width="1"/><rect x="7.5" y="7.5" width="5" height="5" fill="#d02030"/></svg>
<svg class="a" style="left:1448px;top:29px" width="11" height="11" viewBox="0 0 11 11"><path d="M3.5 0.5H6.5V3.5H9.5V6.5H6.5V9.5H3.5V6.5H0.5V3.5H3.5Z" fill="#d6e84a" stroke="#5aa83a" stroke-width="1"/></svg>
<svg class="a" style="left:1467px;top:29px" width="10" height="10" viewBox="0 0 10 10"><path d="M1.2 1.2L8.8 8.8M8.8 1.2L1.2 8.8" stroke="#9a9a9a" stroke-width="2.4"/></svg>
<svg class="a" style="left:1485px;top:27px" width="13" height="14" viewBox="0 0 13 14"><path d="M1 1L7 7M7 1L1 7" stroke="#c8c8c8" stroke-width="2"/><path d="M4.5 5.5L11.5 12.5M11.5 5.5L4.5 12.5" stroke="#8a8a8a" stroke-width="2.4"/></svg>
<div class="a" style="left:1504.5px;top:29.5px;width:8.5px;height:4px;border:1.5px solid #333;border-radius:1.5px;background:#fff"></div>
<div class="a" style="left:1523px;top:29px;width:9px;height:9px;border:1.5px solid #3a3a3a;border-top:2.5px solid #7a7a7a;border-radius:2px;background:#f0f0f0"></div>
<div class="a" style="left:600px;top:58px;width:936px;height:470px;background:#fff"></div>
<div class="a" style="left:601px;top:67px;width:934px;height:461px;border:1px solid #e6e6e6;border-top:2px solid #ececec;border-bottom:none"></div>
<div class="t" style="left:608px;top:81px;font-size:11.5px;color:#111;font-weight:700;letter-spacing:0px;">Variables and watches</div>
<div class="a" style="left:612px;top:103px;width:725px;height:425px;border:1px solid #c6c6ca;border-bottom:none;background:#fff"></div>
<div class="a" style="left:1339px;top:103px;width:182px;height:425px;background:#efefef;border:2px solid #f5f5f5;border-bottom:none;border-right-width:1px"></div>
<div class="a" style="left:1502px;top:104px;width:1px;height:424px;background:#f7f7f7"></div>
<svg class="a" style="left:1507px;top:111px" width="8" height="6" viewBox="0 0 8 6"><path d="M0 5.5L4 0.5L8 5.5Z" fill="#a2a2a2"/></svg>
<svg class="a" style="left:620px;top:111.5px" width="5" height="7" viewBox="0 0 5 7"><path d="M0.8 0.8L3.8 3.5L0.8 6.2" fill="none" stroke="#777" stroke-width="1"/></svg>
<div class="a" style="left:632.2px;top:108.8px;width:11.6px;height:11.6px;border-radius:50%;background:#6169f2"></div>
<svg class="a" style="left:634px;top:111.5px" width="8" height="6" viewBox="0 0 8 6"><path d="M6 0.5H2Q0.5 0.5 0.5 2.7Q0.5 5 2 5H6" fill="none" stroke="#dfe2ff" stroke-width="0.8"/><ellipse cx="6" cy="2.75" rx="1.3" ry="2.2" fill="none" stroke="#dfe2ff" stroke-width="0.8"/><rect x="2" y="2.2" width="2" height="1" fill="#dfe2ff"/></svg>
<div class="t" style="left:648px;top:107.5px;color:#862b2b;letter-spacing:-0.17px">Publish</div>
<div class="t" style="left:690px;top:107.5px;color:#b8b8b8;letter-spacing:0px">=</div>
<div class="t" style="left:700px;top:107.5px;color:#333;letter-spacing:-0.08px">Publish</div>
<svg class="a" style="left:620px;top:130px" width="5" height="7" viewBox="0 0 5 7"><path d="M0.8 0.8L3.8 3.5L0.8 6.2" fill="none" stroke="#777" stroke-width="1"/></svg>
<svg class="a" style="left:633px;top:128px" width="11" height="11" viewBox="0 0 11 11"><rect x="0.5" y="0.5" width="10" height="10" fill="#eef6fc" stroke="#94c4ea" stroke-dasharray="1.2 0.4"/><text x="5.5" y="8.8" text-anchor="middle" font-family="Liberation Sans" font-weight="bold" font-size="10" fill="#2a4a9a">e</text></svg>
<div class="t" style="left:649px;top:125.9px;color:#862b2b;letter-spacing:0.11px">attributes</div>
<div class="t" style="left:702px;top:125.9px;color:#b8b8b8;letter-spacing:0px">=</div>
<div class="t" style="left:714px;top:125.9px;color:#a8a8a8;letter-spacing:-0.05px">{LocalFileAttributes}</div>
<div class="t" style="left:823px;top:125.9px;color:#333;letter-spacing:-0.059px">LocalFileAttributes[creationTime=2024-06-24T18:52:25.500012,directory=false,lastAccessTime=</div>
<svg class="a" style="left:633px;top:146.7px" width="11" height="11" viewBox="0 0 11 11"><circle cx="5.5" cy="5.5" r="4.8" fill="#f4fbf4" stroke="#3a8a3a" stroke-width="1"/><text x="5.5" y="8.6" text-anchor="middle" font-family="Liberation Sans" font-weight="bold" font-size="8.5" fill="#2f7f2f">a</text></svg>
<div class="t" style="left:649px;top:144.3px;color:#862b2b;letter-spacing:0.22px">correlationId</div>
<div class="t" style="left:720px;top:144.3px;color:#b8b8b8;letter-spacing:0px">=</div>
<div class="t" style="left:731.5px;top:144.3px;color:#2a2ae8;letter-spacing:0.01px">"1f909660-39e8-11ef-be03-4ae7da430a29"</div>
<svg class="a" style="left:620px;top:166.7px" width="5" height="7" viewBox="0 0 5 7"><path d="M0.8 0.8L3.8 3.5L0.8 6.2" fill="none" stroke="#777" stroke-width="1"/></svg>
<svg class="a" style="left:633px;top:164.7px" width="11" height="11" viewBox="0 0 11 11"><rect x="0.5" y="0.5" width="10" height="10" fill="#eef6fc" stroke="#94c4ea" stroke-dasharray="1.2 0.4"/><text x="5.5" y="8.8" text-anchor="middle" font-family="Liberation Sans" font-weight="bold" font-size="10" fill="#2a4a9a">e</text></svg>
<div class="t" style="left:648px;top:162.7px;color:#862b2b;letter-spacing:0.45px">payload</div>
<div class="t" style="left:695px;top:162.7px;color:#b8b8b8;letter-spacing:0px">=</div>
<div class="t" style="left:705.8px;top:162.7px;color:#333;letter-spacing:-0.21px">EmpId,EmpName,Sal</div>
<svg class="a" style="left:633px;top:182.2px" width="11" height="11" viewBox="0 0 11 11"><circle cx="5.5" cy="5.5" r="4.8" fill="#f4fbf4" stroke="#3a8a3a" stroke-width="1"/><text x="5.5" y="8.6" text-anchor="middle" font-family="Liberation Sans" font-weight="bold" font-size="8.5" fill="#2f7f2f">a</text></svg>
<div class="t" style="left:648px;top:181.1px;color:#862b2b;letter-spacing:0.6px">rootId</div>
<div class="t" style="left:685px;top:181.1px;color:#b8b8b8;letter-spacing:0px">=</div>
<div class="t" style="left:696px;top:181.1px;color:#2a2ae8;letter-spacing:0.01px">"1f909660-39e8-11ef-be03-4ae7da430a29"</div>
<svg class="a" style="left:633px;top:200.7px" width="11" height="11" viewBox="0 0 11 11"><circle cx="5.5" cy="5.5" r="4.8" fill="#f4fbf4" stroke="#3a8a3a" stroke-width="1"/><text x="5.5" y="8.6" text-anchor="middle" font-family="Liberation Sans" font-weight="bold" font-size="8.5" fill="#2f7f2f">a</text></svg>
<div class="t" style="left:649px;top:199.5px;color:#862b2b;letter-spacing:-0.4px">vars</div>
<div class="t" style="left:673px;top:199.5px;color:#b8b8b8;letter-spacing:0px">=</div>
<div class="t" style="left:684.6px;top:199.5px;color:#a8a8a8;letter-spacing:-0.25px">{Map}</div>
<div class="t" style="left:719.3px;top:199.5px;color:#333;letter-spacing:0px">size = 0</div>
</body></html>
